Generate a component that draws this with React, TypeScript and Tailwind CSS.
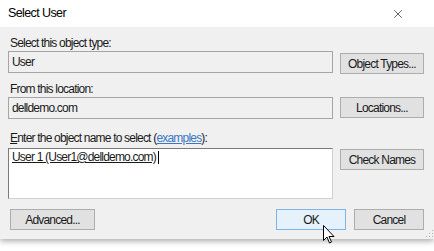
import { X } from "lucide-react";

function Btn({ label, primary, className = "" }: { label: string; primary?: boolean; className?: string }) {
  return (
    <div
      className={`h-[21px] flex items-center justify-center border text-[12px] text-[#1a1a1a] ${
        primary ? "bg-[#e5f1fb] border-[#7eb4ea]" : "bg-[#e1e1e1] border-[#adadad]"
      } ${className}`}
    >
      {label}
    </div>
  );
}

export default function App() {
  return (
    <div
      className="w-[434px] h-[251px] bg-white relative overflow-hidden tracking-[-0.8px]"
      style={{ fontFamily: '"Liberation Sans", Arial, sans-serif' }}
    >
      <div className="shadow-[0_2px_6px_rgba(0,0,0,0.35)]">
        {/* Title bar */}
        <div className="h-[27px] bg-white flex items-center justify-between pl-2 pr-[29px]">
          <span className="text-[12.5px] text-black tracking-[-0.6px]">Select User</span>
          <X size={14} strokeWidth={1.2} className="text-[#222]" />
        </div>

        {/* Body */}
        <div className="bg-[#f0f0f0] px-2 pt-[9px] pb-[9px] text-[12px] text-[#1a1a1a]">
          <div className="leading-[15px] pl-[2px]">Select this object type:</div>
          <div className="flex gap-[7px]">
            <div className="w-[325px] h-[22px] border border-[#a5a5a5] bg-[#f0f0f0] flex items-center pl-[3px]">User</div>
            <Btn label="Object Types..." className="w-[84px] mt-[2px]" />
          </div>

          <div className="leading-[15px] pl-[2px] mt-[8px]">From this location:</div>
          <div className="flex gap-[7px]">
            <div className="w-[325px] h-[22px] border border-[#a5a5a5] bg-[#f0f0f0] flex items-center pl-[3px]">delldemo.com</div>
            <Btn label="Locations..." className="w-[84px]" />
          </div>

          <div className="leading-[15px] pl-[2px] mt-[12px] mb-[2px]">
            <span className="underline">E</span>nter the object name to select (
            <span className="text-[#3a78c6] underline">examples</span>):
          </div>
          <div className="flex gap-[7px]">
            <div className="w-[325px] h-[51px] border border-[#7a7a7a] border-r-[#d0d0d0] border-b-[#d0d0d0] bg-white pl-[3px] pt-[1px] leading-[15px]">
              <span className="underline">User 1 (User1@delldemo.com)</span>
              <span className="inline-block w-px h-[13px] bg-black align-middle ml-[2px]" />
            </div>
            <Btn label="Check Names" className="w-[84px] mt-px" />
          </div>

          <div className="flex items-center mt-[10px]">
            <Btn label="Advanced..." className="w-[85px] ml-[2px]" />
            <div className="flex-1" />
            <Btn label="OK" primary className="w-[70px]" />
            <Btn label="Cancel" className="w-[70px] ml-[8px] mr-[2px]" />
          </div>
        </div>
      </div>

      {/* resize grip */}
      <svg className="absolute left-[426px] top-[230px]" width="8" height="8" viewBox="0 0 8 8">
        <rect x="6" y="0" width="1" height="1" fill="#b0b0b0" />
        <rect x="3" y="3" width="1" height="1" fill="#b0b0b0" />
        <rect x="6" y="3" width="1" height="1" fill="#b0b0b0" />
        <rect x="0" y="6" width="1" height="1" fill="#b0b0b0" />
        <rect x="3" y="6" width="1" height="1" fill="#b0b0b0" />
        <rect x="6" y="6" width="1" height="1" fill="#b0b0b0" />
      </svg>

      {/* mouse cursor */}
      <svg className="absolute left-[323px] top-[225px]" width="13" height="20" viewBox="0 0 13 20">
        <path d="M0.5 0.5 L0.5 15.5 L4 12 L6.5 18 L8.5 17 L6 11.5 L11 11.5 Z" fill="white" stroke="black" strokeWidth="1" strokeLinejoin="round" />
      </svg>
    </div>
  );
}
